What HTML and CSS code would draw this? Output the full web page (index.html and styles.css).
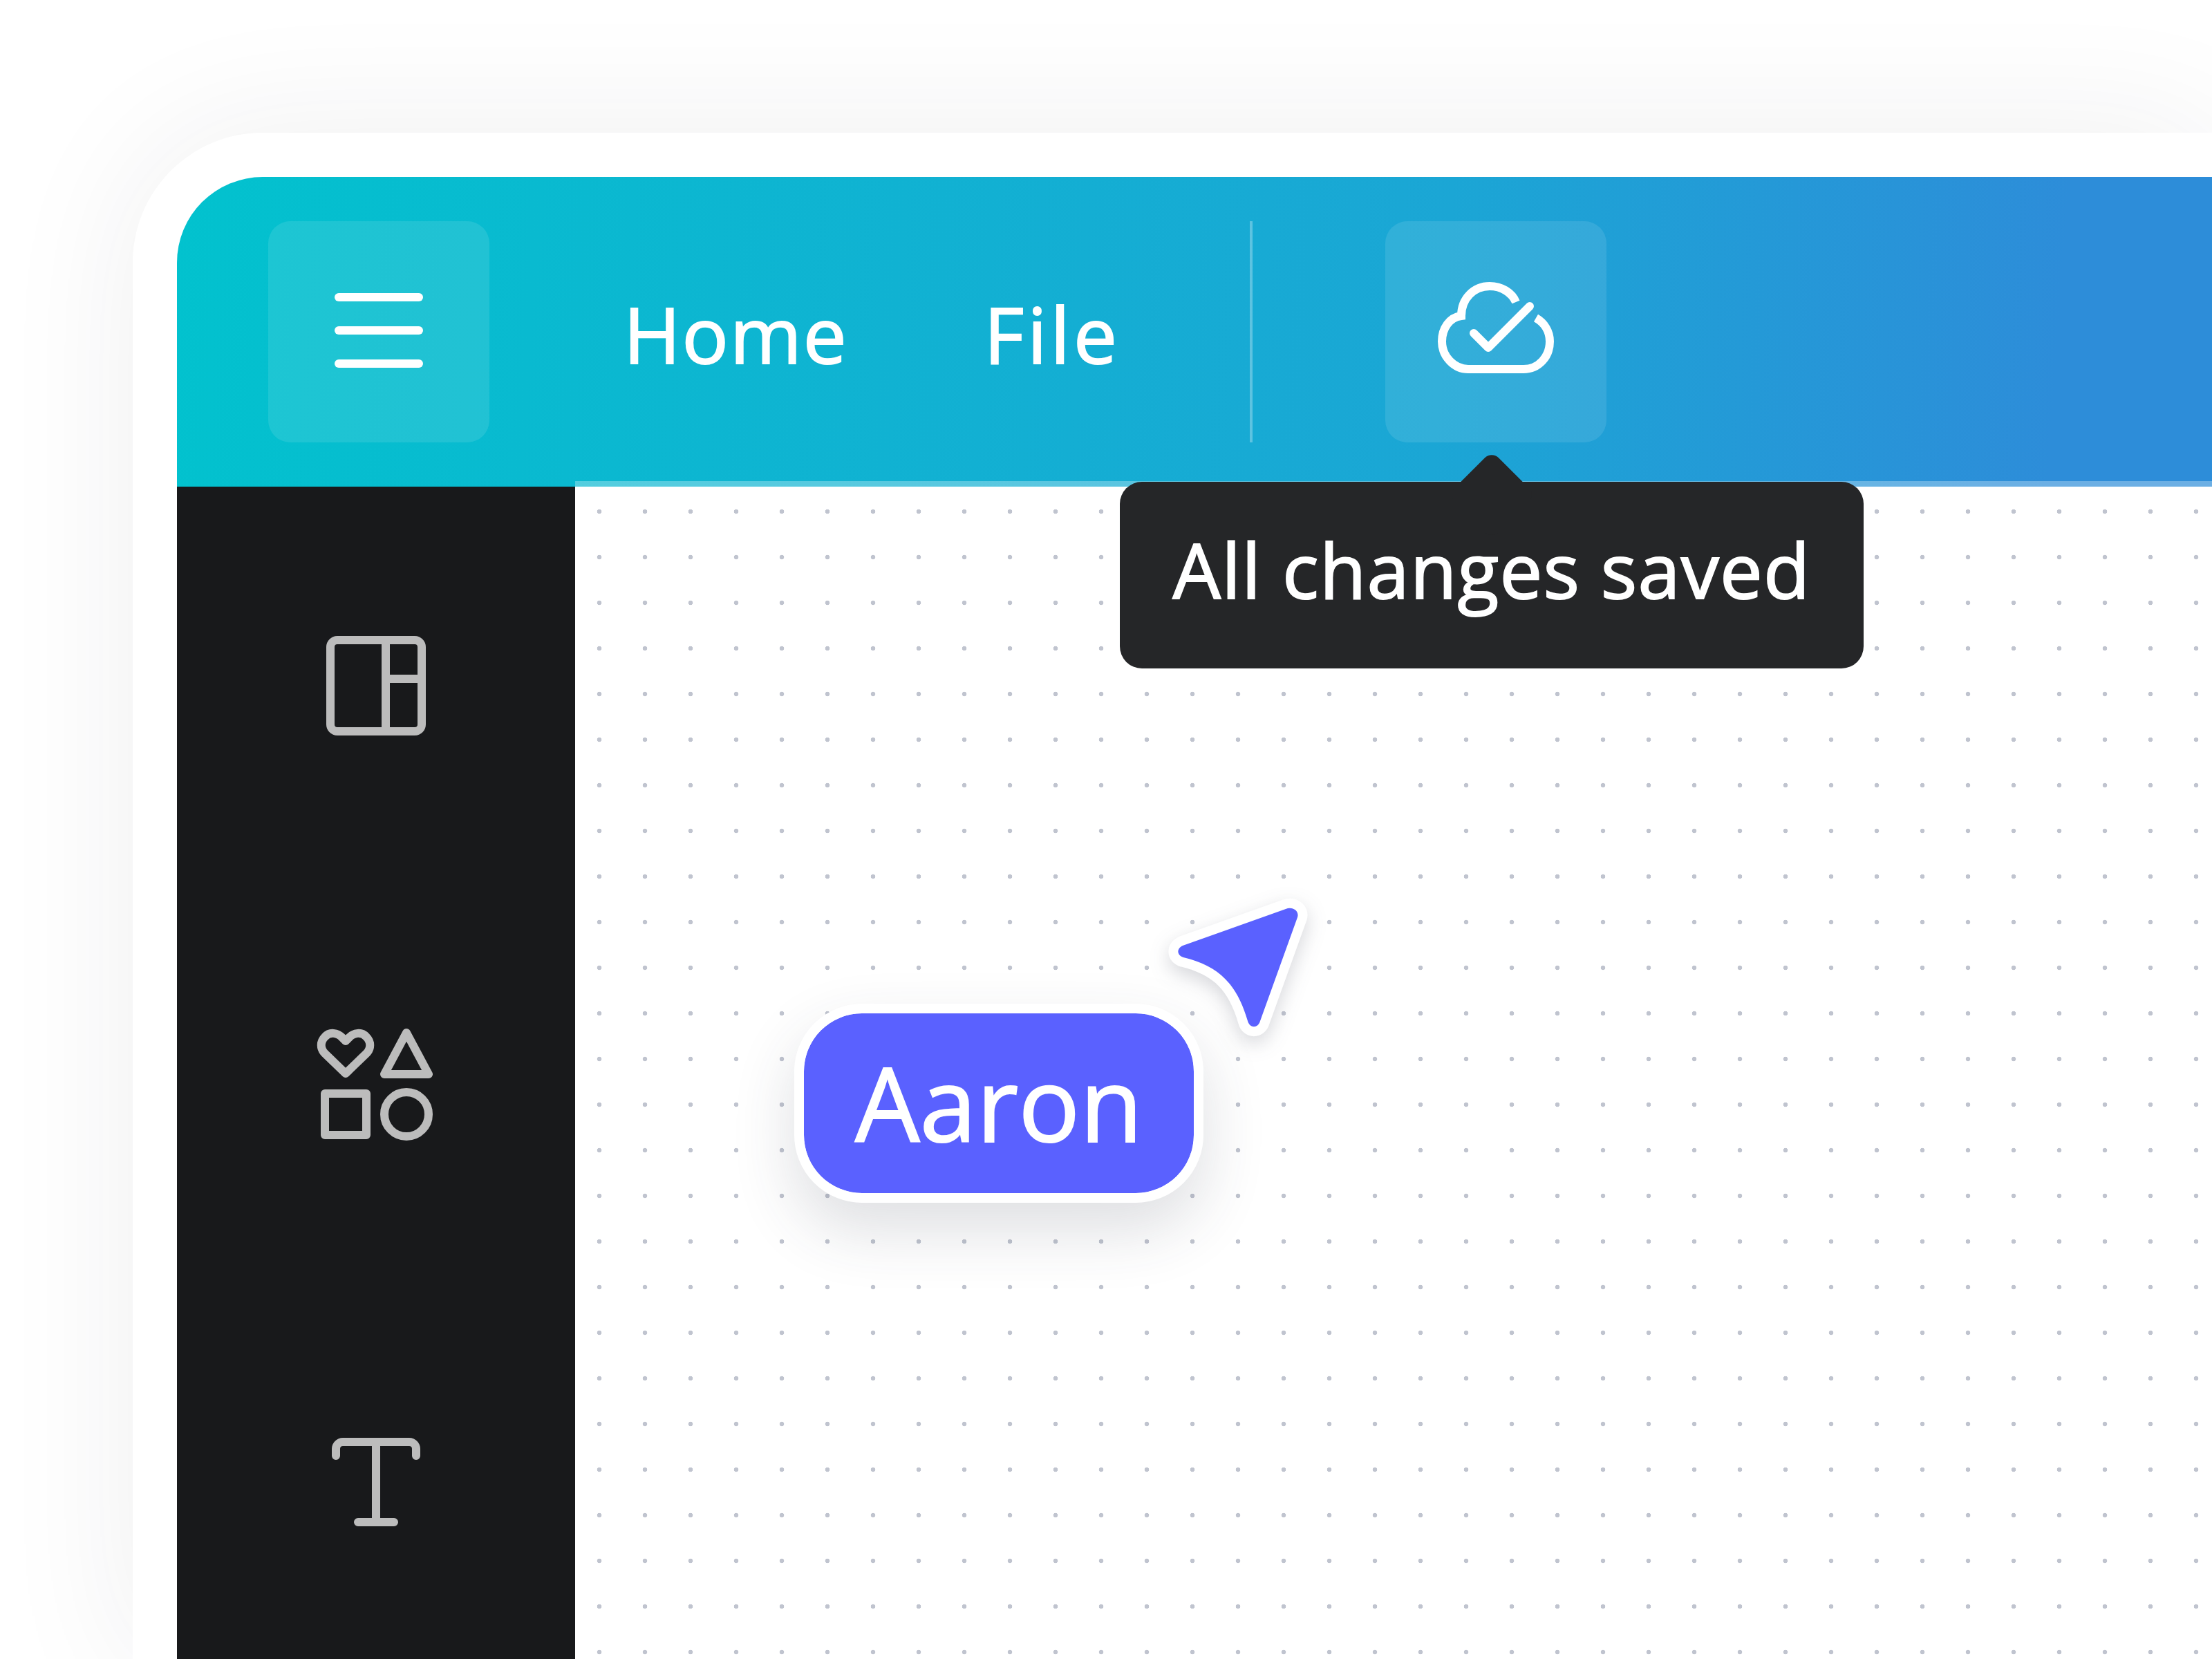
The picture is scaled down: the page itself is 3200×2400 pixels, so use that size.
FILE: index.html
```html
<!DOCTYPE html>
<html lang="en">
<head>
<meta charset="utf-8">
<title>Editor</title>
<link rel="stylesheet" href="styles.css">
</head>
<body>
<div class="stage">
  <div class="frame">
    <div class="app">
      <header class="topbar">
        <button class="tool-btn menu-btn" type="button" aria-label="Menu">
          <span class="bar"></span><span class="bar"></span><span class="bar"></span>
        </button>
        <nav class="nav">
          <span class="nav-item nav-home">Home</span>
          <span class="nav-item nav-file">File</span>
        </nav>
        <span class="divider"></span>
        <button class="tool-btn" type="button" aria-label="Saved">
          <svg class="icon-cloud" viewBox="0 0 320 320">
            <path d="M189 117C183 103 168 94 151 94C128 94 110 112 110 137C93 139 82 155 82 174C82 196 100 214 120 214H200C222 214 238 196 238 174C238 159 230 147 218 140"/>
            <path class="check" d="M128 162L149 183L209 123"/>
          </svg>
        </button>
      </header>
      <div class="workspace">
        <aside class="sidebar">
          <div class="side-cell">
            <svg class="side-icon" viewBox="0 0 192 192">
              <rect x="30" y="30" width="132" height="132" rx="10"/>
              <path d="M110 30V162M110 86H162"/>
            </svg>
          </div>
          <div class="side-cell">
            <svg class="side-icon" viewBox="0 0 192 192">
              <path d="M52 34L47 29C40 22 29 20 22 28C15 35 15 45 22 52L52 81L82 52C89 45 89 35 82 28C75 20 64 22 57 29Z"/>
              <path d="M140 22L172 82H108Z"/>
              <rect x="22" y="110" width="60" height="60"/>
              <circle cx="140" cy="140" r="32"/>
            </svg>
          </div>
          <div class="side-cell">
            <svg class="side-icon" viewBox="0 0 192 192">
              <path class="round" d="M38 58V48A10 10 0 0 1 48 38H144A10 10 0 0 1 154 48V58M96 38V154M70 154H122"/>
            </svg>
          </div>
        </aside>
        <main class="canvas">
          <div class="name-tag">Aaron</div>
          <svg class="cursor" viewBox="0 0 220 220">
            <path d="M32 95C85 108 110 135 125 187C128 198 140 198 143 187L197 37C200 28 190 21 180 25L31 78C22 82 22 92 32 95Z"/>
          </svg>
        </main>
      </div>
      <div class="tooltip">All changes saved</div>
    </div>
  </div>
</div>
</body>
</html>
```
FILE: styles.css
```css
html, body {
  margin: 0;
  height: 2400px;
  overflow: hidden;
  background: #fff;
}

.stage {
  padding: 192px 0 0 192px;
}

.frame {
  width: 3008px;
  height: 2208px;
  box-sizing: border-box;
  padding: 64px 0 0 64px;
  background: #fff;
  border-radius: 188px 0 0 0;
  box-shadow: 0 0 200px rgba(40, 40, 60, 0.075);
}

.app {
  position: relative;
  display: flex;
  flex-direction: column;
  height: 2144px;
  border-radius: 124px 0 0 0;
  overflow: hidden;
  font-family: "Open Sans", "Noto Sans", sans-serif;
  font-weight: 500;
  color: #fff;
}

.topbar {
  position: relative;
  flex: none;
  display: flex;
  align-items: center;
  height: 448px;
  padding-left: 132px;
  box-sizing: border-box;
  background: linear-gradient(94deg, #02c2ce 0%, #1ba6d5 62%, #2d8dd9 92%, #2d8dd9 100%);
}

.topbar::after {
  content: "";
  position: absolute;
  left: 576px;
  right: 0;
  bottom: 0;
  height: 8px;
  background: rgba(255, 255, 255, 0.3);
}

.tool-btn {
  flex: none;
  display: flex;
  flex-direction: column;
  align-items: center;
  justify-content: center;
  width: 320px;
  height: 320px;
  padding: 0;
  border: 0;
  border-radius: 32px;
  background: rgba(255, 255, 255, 0.1);
}

.menu-btn {
  gap: 36px;
  padding-bottom: 4px;
}

.bar {
  display: block;
  width: 128px;
  height: 12px;
  border-radius: 6px;
  background: #fff;
}

.nav {
  display: flex;
  margin-left: 194px;
  padding-top: 6px;
  width: 906px;
  box-sizing: border-box;
}

.nav-item {
  font-size: 112px;
  line-height: 1;
  -webkit-text-stroke: 2px #fff;
}

.nav-home {
  letter-spacing: 2px;
  margin-right: 197px;
}

.nav-file {
  letter-spacing: 5px;
}

.divider {
  flex: none;
  width: 4px;
  height: 320px;
  margin-right: 192px;
  background: rgba(255, 255, 255, 0.3);
}

.icon-cloud {
  width: 320px;
  height: 320px;
  fill: none;
  stroke: #fff;
  stroke-width: 12;
}

.icon-cloud .check {
  stroke-linecap: round;
  stroke-linejoin: round;
}

.workspace {
  flex: 1;
  display: flex;
  min-height: 0;
}

.sidebar {
  flex: none;
  width: 576px;
  background: #18191b;
}

.side-cell {
  display: flex;
  align-items: center;
  justify-content: center;
  height: 576px;
}

.side-icon {
  width: 192px;
  height: 192px;
  fill: none;
  stroke: #bcbcbc;
  stroke-width: 12;
  stroke-linejoin: round;
}

.side-icon .round {
  stroke-linecap: round;
}

.canvas {
  position: relative;
  flex: 1;
  background-color: #fff;
  background-image: radial-gradient(circle at 35px 36px, #c0c4cf 3px, rgba(192, 196, 207, 0) 3.6px);
  background-size: 66px 66px;
}

.name-tag {
  position: absolute;
  left: 317px;
  top: 748px;
  display: flex;
  align-items: center;
  justify-content: center;
  width: 564px;
  height: 258px;
  padding-bottom: 2px;
  border: 14px solid #fff;
  border-radius: 98px;
  background: #5a61ff;
  background-clip: padding-box;
  box-shadow: 0 40px 90px rgba(50, 55, 75, 0.16);
  font-size: 148px;
  line-height: 1;
  -webkit-text-stroke: 2px #fff;
}

.cursor {
  position: absolute;
  left: 848px;
  top: 586px;
  width: 220px;
  height: 220px;
  overflow: visible;
  fill: #5a61ff;
  stroke: #fff;
  stroke-width: 28;
  stroke-linejoin: round;
  paint-order: stroke;
  filter: drop-shadow(0 10px 14px rgba(50, 55, 75, 0.2));
}

.tooltip {
  position: absolute;
  left: 1364px;
  top: 441px;
  display: flex;
  align-items: center;
  justify-content: center;
  width: 1076px;
  height: 270px;
  box-sizing: border-box;
  padding-bottom: 18px;
  border-radius: 32px;
  background: #252628;
  font-size: 110px;
  line-height: 1;
  letter-spacing: 1.2px;
  -webkit-text-stroke: 2px #fff;
}

.tooltip::before {
  content: "";
  position: absolute;
  left: 493px;
  top: -26px;
  width: 90px;
  height: 90px;
  border-radius: 14px;
  background: #252628;
  transform: rotate(45deg);
}
```
